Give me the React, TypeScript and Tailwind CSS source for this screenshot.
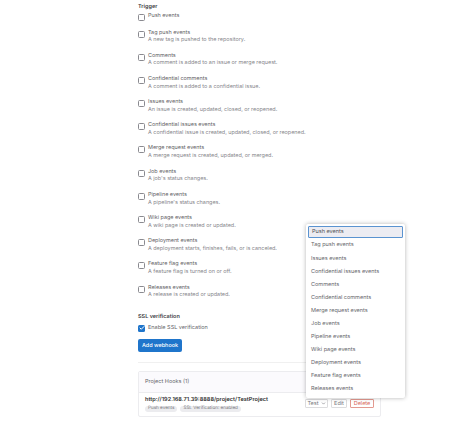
import { Check, ChevronDown } from "lucide-react";

const triggers = [
  { label: "Push events", help: "" },
  { label: "Tag push events", help: "A new tag is pushed to the repository." },
  { label: "Comments", help: "A comment is added to an issue or merge request." },
  { label: "Confidential comments", help: "A comment is added to a confidential issue." },
  { label: "Issues events", help: "An issue is created, updated, closed, or reopened." },
  { label: "Confidential issues events", help: "A confidential issue is created, updated, closed, or reopened." },
  { label: "Merge request events", help: "A merge request is created, updated, or merged." },
  { label: "Job events", help: "A job's status changes." },
  { label: "Pipeline events", help: "A pipeline's status changes." },
  { label: "Wiki page events", help: "A wiki page is created or updated." },
  { label: "Deployment events", help: "A deployment starts, finishes, fails, or is canceled." },
  { label: "Feature flag events", help: "A feature flag is turned on or off." },
  { label: "Releases events", help: "A release is created or updated." },
];

const menuItems = [
  "Push events",
  "Tag push events",
  "Issues events",
  "Confidential issues events",
  "Comments",
  "Confidential comments",
  "Merge request events",
  "Job events",
  "Pipeline events",
  "Wiki page events",
  "Deployment events",
  "Feature flag events",
  "Releases events",
];

function TriggerRow({ label, help }: { label: string; help: string }) {
  return (
    <div className={help ? "flex h-[23.2px] items-start gap-[3px]" : "flex h-[16.5px] items-start gap-[3px]"}>
      <div className="mt-[1px] h-[7px] w-[7px] shrink-0 rounded-[1.5px] border border-[#8a8a90] bg-white" />
      <div className="text-[5.45px] leading-[7.7px]">
        <div className="text-[#5e5e63]">{label}</div>
        {help && <div className="text-[#85858a]">{help}</div>}
      </div>
    </div>
  );
}

export default function App() {
  return (
    <div className="relative h-[426px] w-[474px] overflow-hidden bg-white font-['Inter',sans-serif] [text-rendering:geometricPrecision]">
      <div className="pl-[138px] pt-[3px]">
        <div className="h-[10px] text-[5.5px] font-semibold leading-[8px] text-[#404045]">Trigger</div>
        <div>
          {triggers.map((t) => (
            <TriggerRow key={t.label} label={t.label} help={t.help} />
          ))}
        </div>
        <div className="mt-[5.5px] text-[5.5px] font-semibold leading-[8px] text-[#404045]">SSL verification</div>
        <div className="mt-[3px] flex items-center gap-[3px]">
          <div className="flex h-[7px] w-[7px] items-center justify-center rounded-[1.5px] bg-[#1f75cb]">
            <Check className="h-[6px] w-[6px] text-white" strokeWidth={4} />
          </div>
          <div className="text-[5.5px] leading-[8px] text-[#66666b]">Enable SSL verification</div>
        </div>
        <div className="mt-[7px] flex h-[13px] w-[44px] items-center justify-center rounded-[2px] bg-[#1f75cb] text-[5.5px] font-medium text-white">
          Add webhook
        </div>
        <div className="mt-[10px] h-px w-[243px] bg-[#f0f0f0]" />
        <div className="mt-[8px] w-[243px] rounded-[2px] border border-[#ececef]">
          <div className="flex h-[21px] items-center border-b border-[#ececef] bg-[#fbfafd] pl-[6px] text-[5.5px] text-[#66666b]">
            Project Hooks (1)
          </div>
          <div className="flex h-[23px] items-start justify-between pl-[6px] pr-[6px] pt-[3px]">
            <div>
              <div className="text-[5.6px] font-semibold leading-[8px] text-[#303030]">
                http://192.168.71.39:8888/project/TestProject
              </div>
              <div className="mt-[2px] flex gap-[3px] text-[4.6px] leading-[6px] text-[#77777c]">
                <span className="rounded-full bg-[#ececef] px-[3px]">Push events</span>
                <span className="rounded-full bg-[#ececef] px-[3px]">SSL Verification: enabled</span>
              </div>
            </div>
            <div className="mt-[3px] flex gap-[3px] text-[5.5px] text-[#77777c]">
              <div className="flex h-[9px] w-[23px] items-center justify-center gap-[2px] rounded-[1px] border border-[#dcdcde]">
                Test
                <ChevronDown className="h-[5px] w-[5px] shrink-0" strokeWidth={3} />
              </div>
              <div className="flex h-[9px] w-[16px] items-center justify-center rounded-[1px] border border-[#dcdcde]">Edit</div>
              <div className="flex h-[9px] w-[24px] items-center justify-center rounded-[1px] border border-[#e39a90] text-[#d8685a]">Delete</div>
            </div>
          </div>
        </div>
      </div>

      <div className="absolute left-[306px] top-[224px] w-[99px] rounded-[2px] bg-white py-[2px] shadow-[0_0_4px_rgba(0,0,0,0.3)]">
        {menuItems.map((item, i) => (
          <div
            key={item}
            className={
              i === 0
                ? "mx-[2px] mb-[1px] flex h-[12px] items-center rounded-[1px] border border-[#5a93d0] bg-[#ececf2] pl-[3px] text-[5.5px] text-[#505055]"
                : "flex h-[13.1px] items-center pl-[5px] text-[5.5px] text-[#66666b]"
            }
          >
            {item}
          </div>
        ))}
      </div>
    </div>
  );
}
